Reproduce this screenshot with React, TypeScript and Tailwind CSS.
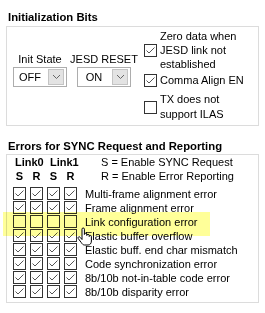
import React from "react";

const Check = ({ checked }: { checked: boolean }) => (
  <div className="w-[13px] h-[13px] border border-[#333333] bg-white shrink-0 flex items-center justify-center">
    {checked && (
      <svg width="11" height="11" viewBox="0 0 11 11">
        <polyline points="1.5,5.5 4,8 9.5,2.5" fill="none" stroke="#555555" strokeWidth="1" />
      </svg>
    )}
  </div>
);

const Select = ({ value }: { value: string }) => (
  <div className="w-[54px] h-[20px] border border-[#adadad] bg-white flex items-center">
    <span className="flex-1 text-center text-[11px] leading-[14px] pr-[2px]">{value}</span>
    <div className="w-[16px] h-[16px] mr-[2px] border border-[#c4c4c4] bg-[#e3e3e3] flex items-center justify-center">
      <svg width="9" height="6" viewBox="0 0 9 6">
        <polyline points="1,1 4.5,4.5 8,1" fill="none" stroke="#666666" strokeWidth="1" />
      </svg>
    </div>
  </div>
);

const errors: [string, boolean][] = [
  ["Multi-frame alignment error", true],
  ["Frame alignment error", true],
  ["Link configuration error", false],
  ["Elastic buffer overflow", true],
  ["Elastic buff. end char mismatch", true],
  ["Code synchronization error", true],
  ["8b/10b not-in-table code error", true],
  ["8b/10b disparity error", true],
];

export default function App() {
  return (
    <div className="relative w-[265px] h-[313px] bg-white text-black font-['Liberation_Sans',Arial,sans-serif] text-[11px]">
      <div className="pt-[10px] pl-[8px] text-[11.3px] font-bold leading-[15px]">Initialization Bits</div>
      <div className="mx-[6px] mt-[1px] h-[100px] border border-[#dcdcdc] flex">
        <div className="flex pt-[25px] pl-[6px] gap-[5px]">
          <div className="w-[54px] flex flex-col items-center">
            <div className="leading-[14px] mb-[1px] whitespace-nowrap">Init State</div>
            <Select value="OFF" />
          </div>
          <div className="w-[64px] flex flex-col items-center">
            <div className="leading-[14px] mb-[1px] whitespace-nowrap">JESD RESET</div>
            <Select value="ON" />
          </div>
        </div>
        <div className="flex flex-col pl-[8px] pt-[2px] leading-[14px]">
          <div className="flex items-center gap-[3px]">
            <Check checked />
            <div>
              Zero data when
              <br />
              JESD link not
              <br />
              established
            </div>
          </div>
          <div className="flex items-center gap-[3px] mt-[2px]">
            <Check checked />
            <div>Comma Align EN</div>
          </div>
          <div className="flex items-center gap-[3px] mt-[5px]">
            <Check checked={false} />
            <div className="leading-[15px]">
              TX does not
              <br />
              support ILAS
            </div>
          </div>
        </div>
      </div>

      <div className="pt-[13px] pl-[8px] text-[11.3px] font-bold leading-[15px]">Errors for SYNC Request and Reporting</div>
      <div className="mx-[6px] h-[149px] border border-[#dcdcdc] pl-[6px]">
        <div className="flex leading-[14px]">
          <div className="w-[71px] flex flex-col">
            <div className="flex font-bold">
              <span className="w-[37px] pl-[2px]">Link0</span>
              <span>Link1</span>
            </div>
            <div className="grid grid-cols-[13px_13px_13px_13px] gap-x-[4px] font-bold">
              <span className="text-center">S</span>
              <span className="text-center">R</span>
              <span className="text-center">S</span>
              <span className="text-center">R</span>
            </div>
          </div>
          <div className="pl-[17px]">
            <div>S = Enable SYNC Request</div>
            <div>R = Enable Error Reporting</div>
          </div>
        </div>
        <div className="flex flex-col gap-[1px] mt-[4px]">
          {errors.map(([label, on]) => (
            <div key={label} className="flex items-center h-[13px]">
              <div className="grid grid-cols-[13px_13px_13px_13px] gap-x-[4px]">
                <Check checked={on} />
                <Check checked={on} />
                <Check checked={on} />
                <Check checked={on} />
              </div>
              <span className="pl-[8px] leading-[14px] whitespace-nowrap">{label}</span>
            </div>
          ))}
        </div>
      </div>

      <div className="absolute left-[3px] top-[212px] w-[207px] h-[24px] bg-[#ffff99] mix-blend-multiply pointer-events-none" />
      <svg className="absolute left-[77px] top-[227px]" width="15" height="19" viewBox="0 0 15 19">
        <path
          d="M5 9 V2.2 a1.2 1.2 0 0 1 2.4 0 V7.5 a1.2 1.2 0 0 1 2.4 0 V8.5 a1.2 1.2 0 0 1 2.4 0 V9.5 a1.1 1.1 0 0 1 2.2 0 V14 c0 2.5 -1.4 4 -3.3 4 H7.5 c-1.4 0 -2.3 -1 -3.2 -2.4 L1.2 11.5 a1.1 1.1 0 0 1 1.9 -1.2 L5 12.5 Z"
          fill="white"
          stroke="black"
          strokeWidth="1"
        />
      </svg>
    </div>
  );
}
